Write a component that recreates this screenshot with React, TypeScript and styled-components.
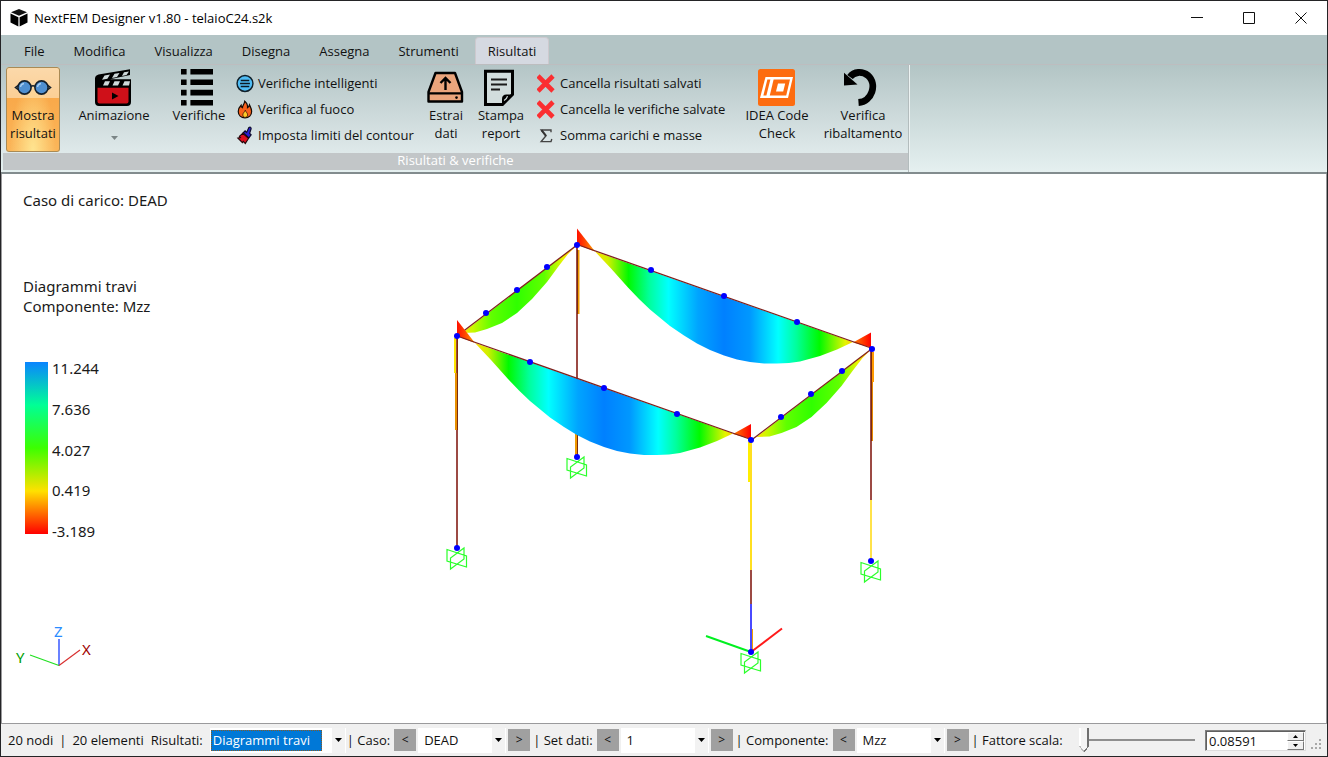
import React, { ReactNode, useState } from 'react';
import styled, { createGlobalStyle, css } from 'styled-components';

const GlobalStyle = createGlobalStyle`
  *, *::before, *::after { box-sizing: border-box; }
  body { margin: 0; background: #fff; }
  body, button, input, select {
    font-family: 'Open Sans', 'Noto Sans', sans-serif;
    font-size: 13px;
    line-height: 18px;
    color: #111;
  }
  button { margin: 0; padding: 0; border: 0; background: none; }
  svg { display: block; flex: none; }
`;

/* ---------- window frame ---------- */

const Window = styled.div`
  display: flex;
  flex-direction: column;
  min-height: 100vh;
  border: 1px solid #242426;
`;

const TitleBar = styled.header`
  display: flex;
  align-items: center;
  height: 34px;
  padding-left: 8px;
  gap: 5px;
  background: #fff;
`;

const Title = styled.h1`
  flex: 1;
  margin: 0;
  font-size: 13px;
  font-weight: 400;
  line-height: 18px;
  color: #000;
`;

const WindowButtons = styled.div`
  display: flex;
`;

const WindowButton = styled.button`
  display: grid;
  place-items: center;
  width: 52px;
  height: 32px;
`;

/* ---------- ribbon ---------- */

const TabBar = styled.nav`
  display: flex;
  align-items: flex-end;
  height: 30px;
  padding-left: 8px;
  background: #b3c4c5;
  border-bottom: 1px solid #bdbdbf;
`;

const Tab = styled.button<{ $active?: boolean }>`
  height: 27px;
  padding: 0 14px 0 15px;
  border-radius: 4px 4px 0 0;
  ${(p) =>
    p.$active &&
    css`
      margin: 0 2px;
      padding: 0 12px;
      background: #d5d9e1;
      border: 1px solid #cdc9ce;
      border-bottom: 0;
    `}
`;

const Ribbon = styled.section`
  display: flex;
  background: linear-gradient(#b3c5c5, #e5f0f0);
  border-bottom: 2px solid #828c8e;
`;

const Group = styled.div`
  display: flex;
  flex-direction: column;
  padding-bottom: 2px;
  border-right: 1px solid #b3bcbd;
  box-shadow: 1px 0 #edf3f3;
`;

const GroupBody = styled.div`
  display: flex;
  gap: 6px;
  height: 88px;
  padding: 2px 2px 0 5px;
  background: linear-gradient(#b4c5c6, #dfe9ea);
`;

const GroupLabel = styled.div`
  height: 17px;
  margin-left: 2px;
  line-height: 15px;
  text-align: center;
  color: #fff;
  background: #c2c6c8;
`;

const BigButton = styled.button<{ $width: number; $active?: boolean }>`
  display: flex;
  flex-direction: column;
  align-items: center;
  width: ${(p) => p.$width}px;
  height: 85px;
  padding-top: 2px;
  border-radius: 3px;
  ${(p) =>
    p.$active &&
    css`
      background:
        radial-gradient(ellipse at 50% 100%, #ffe591 0, rgba(255, 229, 145, 0) 60%),
        linear-gradient(#fbd9ab 0, #fbcf95 36%, #f9a94a 37%, #fbb65a 100%);
      box-shadow: inset 0 0 0 1px #a98a55;
    `}
`;

const BigIcon = styled.span`
  height: 37px;
`;

const ButtonText = styled.span`
  white-space: pre-line;
  text-align: center;
`;

const MenuCaret = styled.span`
  padding-top: 12px;
`;

const SmallColumn = styled.div<{ $width: number; $inset?: number }>`
  display: flex;
  flex-direction: column;
  width: ${(p) => p.$width}px;
  padding: 3px 0 0 ${(p) => p.$inset ?? 0}px;
`;

const SmallButton = styled.button`
  display: flex;
  align-items: center;
  gap: 4px;
  height: 26px;
  white-space: nowrap;
`;

/* ---------- viewport ---------- */

const Viewport = styled.main`
  position: relative;
  display: flex;
  flex: 1;
  flex-direction: column;
  border: 1px solid #9a9a9c;
  border-top: 0;
  background: #fff;
`;

const Scene = styled.svg`
  position: absolute;
  inset: 0;
  width: 100%;
  height: 100%;
`;

const Overlay = styled.div`
  display: flex;
  flex: 1;
  flex-direction: column;
  align-items: flex-start;
  padding: 16px 0 54px 12px;
  font-size: 15px;
  font-family: 'Noto Sans', sans-serif;
  line-height: 20px;
  color: #1a1a1a;
`;

const LoadCase = styled.p`
  margin: 0 0 66px 9px;
`;

const ResultInfo = styled.p`
  margin: 0 0 42px 9px;
`;

const Legend = styled.div`
  display: flex;
  gap: 4px;
  margin-left: 11px;
`;

const ColorScale = styled.div`
  width: 23px;
  height: 172px;
  margin-top: 4px;
  background: linear-gradient(#0a84ff, #00ff96 25%, #3cff00 50%, #ffe100 75%, #ff0000);
`;

const ScaleValues = styled.ul`
  display: flex;
  flex-direction: column;
  justify-content: space-between;
  height: 183px;
  margin: 0;
  padding: 0;
  list-style: none;
`;

const Gizmo = styled.svg`
  margin-top: auto;
`;

/* ---------- status bar ---------- */

const StatusBar = styled.footer`
  display: flex;
  align-items: center;
  height: 32px;
  padding: 0 4px 0 7px;
  background: #f0f0f0;
  white-space: pre;
`;

const StatusText = styled.span`
  padding-right: 6px;
`;

const ResultLabel = styled.label`
  padding: 0 7px 0 1px;
`;

const FieldLabel = styled.label`
  padding: 0 2px 0 1px;
`;

const Combo = styled.span<{ $width: number }>`
  position: relative;
  display: flex;
  flex: none;
  align-items: center;
  width: ${(p) => p.$width}px;
  height: 25px;
  padding: 0 18px 0 1px;
  background: #fff;
`;

const ComboSelect = styled.select<{ $focused?: boolean }>`
  appearance: none;
  width: 100%;
  height: 21px;
  margin: 0;
  padding: 0 5px;
  border: 0;
  outline: 0;
  background: transparent;
  ${(p) =>
    p.$focused &&
    css`
      width: 111px;
      padding: 0 1px;
      color: #fff;
      background: #0078d7;
      border: 1px dotted #8a5a20;
    `}
`;

const ComboArrow = styled.span`
  position: absolute;
  top: 0;
  right: 1px;
  display: grid;
  place-items: center;
  width: 13px;
  height: 25px;
  background: #f2f2f2;
  pointer-events: none;
`;

const StepButton = styled.button`
  flex: none;
  width: 22px;
  height: 22px;
  margin: 0 2px;
  background: #a0a0a0;
  font-size: 12px;
`;

const ScaleSlider = styled.input`
  appearance: none;
  flex: none;
  width: 116px;
  height: 26px;
  margin: 0 10px 0 auto;
  background: linear-gradient(#8e8e8e, #8e8e8e) 4px 12px / 112px 2px no-repeat;
  &::-webkit-slider-thumb {
    appearance: none;
    width: 10px;
    height: 25px;
    background:
      linear-gradient(to bottom right, #f6f6f6 36%, #777 37% 50%, #f0f0f0 51%) 5px 18px / 5px 7px no-repeat,
      linear-gradient(to bottom left, #f6f6f6 36%, #bbb 37% 50%, #f0f0f0 51%) 0 18px / 5px 7px no-repeat,
      linear-gradient(90deg, #fff 0 2px, #f4f4f4 2px 8px, #707070 8px) 0 0 / 10px 18px no-repeat;
  }
`;

const Spinner = styled.span`
  display: flex;
  flex: none;
  width: 101px;
  height: 21px;
  border: 1px solid #808080;
  border-right-color: #ddd;
  border-bottom-color: #ddd;
  box-shadow: inset 1px 1px #606060;
  background: #fff;
`;

const SpinnerInput = styled.input`
  flex: 1;
  min-width: 0;
  padding: 1px 3px 0;
  border: 0;
  outline: 0;
  background: transparent;
`;

const SpinnerButtons = styled.span`
  display: flex;
  flex-direction: column;
  width: 18px;
  padding: 1px 1px 0 0;
`;

const SpinnerButton = styled.button`
  display: grid;
  flex: 1;
  place-items: center;
  background: #f0f0f0;
  border: 1px solid #fff;
  border-right-color: #777;
  border-bottom-color: #777;
`;

const Grip = styled.svg`
  align-self: flex-end;
  margin: 0 0 5px 5px;
`;

/* ---------- icons ---------- */

const AppIcon = () => (
  <svg width="20" height="20" viewBox="0 0 20 20">
    <path d="M10 1 18 4.2 10 7.8 2 4.2Z" fill="#111" />
    <path d="M1.5 5.6 9.4 9.2V18.6L1.5 14.6Z" fill="#000" />
    <path d="M18.5 5.6 10.6 9.2V18.6L18.5 14.6Z" fill="#000" />
  </svg>
);

const GlassesIcon = () => (
  <svg width="38" height="36" viewBox="0 0 38 36">
    <g fill="#4f8fd0" stroke="#14202c" strokeWidth="1.6">
      <circle cx="10.5" cy="18.5" r="6.6" />
      <circle cx="27.5" cy="18.5" r="6.6" />
      <path fill="none" d="M17 17.5q2-1.6 4 0M4 16.5l-2.5 2 2.5 2M34 16.5l2.5 2-2.5 2" />
    </g>
    <path d="M6.5 18a4 4 0 0 1 3.5-3.5M23.5 18a4 4 0 0 1 3.5-3.5" fill="none" stroke="#a8cdf0" strokeWidth="1.3" />
  </svg>
);

const ClapperIcon = () => (
  <svg width="38" height="37" viewBox="1 0 38 37">
    <path d="M1 9.5Q1 6.5 4.5 5.5L36 .2V6L16 10.2H37V33Q37 37 33 37H5Q1 37 1 33Z" fill="#000" />
    <path d="M10.5 6.6 16 5.6 13.4 9.8 8 10.8ZM20.5 4.8 25.5 4 23 8 18 9ZM30 3.2 35 2.4 32.5 6 28 7ZM11 12.2H16L14 16.4H9ZM20.5 12.2H26L24 16.4H18.5ZM30.5 12.2H36L35 16.4H28.5Z" fill="#cfd9da" />
    <path d="M3.5 18.8H34.5V32.5Q34.5 34.6 32.5 34.6H5.5Q3.5 34.6 3.5 32.5Z" fill="#cf1019" />
    <path d="M18 23.5 24.5 27 18 30.5Z" fill="#000" />
  </svg>
);

const ListIcon = () => (
  <svg width="36" height="37" viewBox="0 0 36 37">
    {[0, 10.4, 20.8, 31].map((y) => (
      <path key={y} d={`M0 ${y}h5.6v5.6H0ZM9.4 ${y}H32v5.6H9.4Z`} fill="#000" />
    ))}
  </svg>
);

const LinesIcon = () => (
  <svg width="18" height="19" viewBox="0 0 19 19">
    <circle cx="9.5" cy="9.5" r="8.4" fill="#4fbdf5" stroke="#10202a" strokeWidth="1.5" />
    <path d="M5 6.3h9M4.3 9.5h10.4M5 12.7h9" stroke="#0c1a24" strokeWidth="1.7" />
  </svg>
);

const FireIcon = () => (
  <svg width="18" height="19" viewBox="0 0 19 19">
    <path d="M9.2.8C9 4 6.8 5 6.8 7.6 5.6 7.2 5.4 6 5.4 5 3.4 7 2.4 9.2 2.4 11.6c0 4 3 6.7 7.1 6.7s7-2.8 7-6.7c0-2.9-1.3-4.9-2.3-7C13.8 6.2 13.2 7.2 12.2 7.6 12.4 4.6 11.2 2.3 9.2.8Z" fill="#f8601a" stroke="#160b05" strokeWidth="1.3" />
    <path d="M9.8 10.2c-.2 1.8-2.6 2.6-2.6 5 0 1.7 1.1 2.6 2.5 2.6s2.6-1 2.6-2.6c0-1.9-1.7-2.6-2.5-5Z" fill="#ffc825" stroke="#2b1206" strokeWidth=".8" />
  </svg>
);

const BrushIcon = () => (
  <svg width="18" height="19" viewBox="0 0 19 19">
    <path d="M11.2 6.2 13.6 1Q15.8 0 16 2.4L14.4 7.2 16 8.8 13.6 12 7.6 6.6 9.6 4.6Z" fill="#2b1fd0" stroke="#0a0828" strokeWidth="1.2" />
    <path d="M7.2 7.2 13.2 12.6 9.8 18 7.8 15.8 6.8 17 2 12.2 4.6 11.8 3.6 10.4Z" fill="#e01020" stroke="#220408" strokeWidth="1.2" />
  </svg>
);

const DriveIcon = () => (
  <svg width="38" height="36" viewBox="1 0 38 36">
    <path d="M9.5 4H29L36 23V32.5H2.5V23Z" fill="#eba57c" stroke="#000" strokeWidth="2.4" strokeLinejoin="round" />
    <path d="M2.5 24.4H36" stroke="#000" strokeWidth="2.4" />
    <path d="M19.5 21V10M14.5 14 19.5 9 24.5 14" fill="none" stroke="#000" strokeWidth="2.4" />
    <circle cx="30.5" cy="28.6" r="1.3" />
  </svg>
);

const ReportIcon = () => (
  <svg width="34" height="37" viewBox="2 0 34 37">
    <path d="M3.5 2.2H30.5V25.5L20.5 35.5H3.5Z" fill="#d2dddd" stroke="#000" strokeWidth="3" />
    <path d="M20 36.5V30Q20 25.5 24.5 25.5H32Z" fill="#000" />
    <path d="M22 31.5Q25 30 25.5 27.2" stroke="#d2dddd" strokeWidth="1.2" fill="none" />
    <path d="M9 10.5H25M9 15.5H25M9 20.5H18" stroke="#1b1b1b" strokeWidth="1.8" />
  </svg>
);

const CrossIcon = () => (
  <svg width="19" height="19" viewBox="1 0 19 19">
    <path d="M2 2 17 17M17 2 2 17" stroke="#fb2e31" strokeWidth="4.6" />
  </svg>
);

const SigmaIcon = () => (
  <svg width="19" height="19" viewBox="1 0 19 19">
    <path d="M15 6.2V4H5.2L10 9.8 5.2 15.6H15L15.8 13" fill="none" stroke="#444" strokeWidth="1.4" />
    <path d="M5.5 4.2 10 9.8" stroke="#333" strokeWidth="2" />
  </svg>
);

const IdeaIcon = () => (
  <svg width="38" height="37" viewBox="0 0 38 37">
    <rect width="37" height="37" rx="2.5" fill="#fd6c10" />
    <path d="M7.5 8H35L30 29H2Z" fill="#fff" />
    <path d="M9.4 10.5H12.4L8.4 26.5H5.4Z" fill="#fd6c10" />
    <path d="M15.6 10.5H32L28.2 26.5H11.8Z" fill="#fd6c10" />
    <path d="M20 14.5H27.2L25.2 22.5H18Z" fill="#fff" />
  </svg>
);

const RotateIcon = () => (
  <svg width="38" height="37" viewBox="4 0 38 37">
    <path d="M10 8C14 2.5 22 2 28 6.5 37.5 15 32 32.5 18.5 33.5" fill="none" stroke="#000" strokeWidth="6.8" />
    <path d="M2.5 2.5 17.5 15.5 3.5 16.5Z" fill="#000" />
  </svg>
);

const Caret = ({ color = '#000' }: { color?: string }) => (
  <svg width="7" height="4" viewBox="0 0 7 4">
    <path d="M0 0H7L3.5 4Z" fill={color} />
  </svg>
);

/* ---------- structural model ---------- */

const Support = ({ x, y }: { x: number; y: number }) => (
  <path
    transform={`translate(${x} ${y})`}
    d="M-10 1.5V13L9.5 19V8ZM7 0V11L-6.5 21V10Z"
    fill="none"
    stroke="#2bff2b"
    strokeWidth="1.2"
  />
);

const LongMoment = ({ x, y }: { x: number; y: number }) => (
  <g transform={`translate(${x} ${y})`}>
    <path
      d="M18 7 34 24 51 43 62 54.5 73 65 93 81.5 107 91 120 99 133 105.5 147 111 160 115 173 117.5 187 119 200 119 212 118.5 223 117 243 111.5 260 105 276 97.5Z"
      fill="url(#longMoment)"
    />
    <path d="M0-16V0L18 7Z" fill="url(#leftPeak)" />
    <path d="M294 88V103L276 98Z" fill="url(#rightPeak)" />
    <path d="M0 0 294 103.5" stroke="#80201c" strokeWidth="1.3" />
  </g>
);

const ShortMoment = ({ x, y }: { x: number; y: number }) => (
  <g transform={`translate(${x} ${y})`}>
    <path d="M5-3 18-3.5 30-7 45-13 60-23 75-37 90-54 101-69 111-82 120-91Z" fill="url(#shortMoment)" />
    <path d="M0 0 120-91" stroke="#80201c" strokeWidth="1.3" />
  </g>
);

const nodes: [number, number][] = [
  [457, 336], [530, 362], [604, 388], [677, 414], [751, 440],
  [577, 245], [651, 270], [724, 296], [797, 322], [872, 349],
  [486, 313], [517, 290], [547, 267], [781, 417], [811, 394], [842, 371],
  [457, 548], [577, 457], [871, 561], [751, 652],
];

const Model = () => (
  <Scene viewBox="2 174 1324 549" preserveAspectRatio="xMinYMin meet" role="img" aria-label="Mzz">
    <defs>
      <linearGradient id="longMoment" gradientUnits="userSpaceOnUse" x1="18" y1="0" x2="276" y2="0">
        <stop offset="0" stopColor="#ffe000" />
        <stop offset=".05" stopColor="#d0f000" />
        <stop offset=".13" stopColor="#00fa00" />
        <stop offset=".21" stopColor="#00ff9c" />
        <stop offset=".285" stopColor="#00ffff" />
        <stop offset=".4" stopColor="#00a4ff" />
        <stop offset=".5" stopColor="#0080ff" />
        <stop offset=".6" stopColor="#0098ff" />
        <stop offset=".71" stopColor="#00ffff" />
        <stop offset=".78" stopColor="#00ff9c" />
        <stop offset=".87" stopColor="#00fa00" />
        <stop offset=".97" stopColor="#e4f400" />
        <stop offset="1" stopColor="#ffd000" />
      </linearGradient>
      <linearGradient id="shortMoment" gradientUnits="userSpaceOnUse" x1="5" y1="0" x2="115" y2="0">
        <stop offset="0" stopColor="#ffe600" />
        <stop offset=".1" stopColor="#c8f800" />
        <stop offset=".27" stopColor="#60ff00" />
        <stop offset=".5" stopColor="#30ff00" />
        <stop offset=".75" stopColor="#60ff00" />
        <stop offset=".92" stopColor="#ecf400" />
        <stop offset="1" stopColor="#ffc000" />
      </linearGradient>
      <linearGradient id="leftPeak">
        <stop offset="0" stopColor="#ff1000" />
        <stop offset=".4" stopColor="#ff4000" />
        <stop offset="1" stopColor="#ffa000" />
      </linearGradient>
      <linearGradient id="rightPeak">
        <stop offset="0" stopColor="#ff8000" />
        <stop offset=".7" stopColor="#ff2800" />
        <stop offset="1" stopColor="#ff0000" />
      </linearGradient>
    </defs>

    <g fill="none" strokeWidth="2">
      <path d="M577 245V457" stroke="#9c4a44" />
      <path d="M578.5 250V314" stroke="#f09a00" />
      <path d="M576 432V457" stroke="#f09a00" />
      <path d="M577.5 250V314M577.5 432V457" stroke="#7a2a10" strokeWidth="1" />
      <path d="M457 336V548" stroke="#9c4a44" />
      <path d="M455 338V373" stroke="#ffe600" />
      <path d="M456 373V430" stroke="#e89000" />
      <path d="M457.5 338V430" stroke="#7a2a10" strokeWidth="1" />
      <path d="M871 349V500" stroke="#9c4a44" />
      <path d="M873 352V382" stroke="#ff9a00" />
      <path d="M872 382V441" stroke="#e88a00" />
      <path d="M871.5 352V441" stroke="#7a2a10" strokeWidth="1" />
      <path d="M871 500V561" stroke="#ffe24a" />
    </g>

    <ShortMoment x={457} y={336} />
    <ShortMoment x={751.5} y={440} />
    <LongMoment x={577} y={244.5} />
    <LongMoment x={457} y={336} />

    <g fill="none" strokeWidth="2">
      <path d="M749.5 442V482" stroke="#ffee00" strokeWidth="3" />
      <path d="M751 442V570" stroke="#ffdf20" />
      <path d="M751 570V604" stroke="#9c4a44" />
      <path d="M752 629V652" stroke="#f0a000" />
      <path d="M751 604V652" stroke="#4a4aff" />
      <path d="M706 636 751 652" stroke="#00f020" />
      <path d="M782 628.5 751 652" stroke="#ff1a1a" />
    </g>

    <Support x={457} y={548} />
    <Support x={577} y={457} />
    <Support x={871} y={561} />
    <Support x={751} y={652} />
    {nodes.map(([cx, cy]) => (
      <circle key={`${cx}-${cy}`} cx={cx} cy={cy} r="3" fill="#0000ff" />
    ))}
  </Scene>
);

const AxisGizmo = () => (
  <Gizmo width="80" height="48" viewBox="0 0 80 48" fontSize="15">
    <path d="M45 44.5V18" stroke="#2a4cff" strokeWidth="1.4" />
    <path d="M45 44.5 16 34" stroke="#20e020" strokeWidth="1.2" />
    <path d="M45 44.5 66 29" stroke="#d83030" strokeWidth="1.2" />
    <text x="40" y="16" fill="#2a8cff">Z</text>
    <text x="2" y="42" fill="#00a000">Y</text>
    <text x="68" y="34" fill="#a00000">X</text>
  </Gizmo>
);

/* ---------- composed controls ---------- */

type BigProps = { icon: ReactNode; text: string; width: number; active?: boolean; menu?: boolean };

const Big = ({ icon, text, width, active, menu }: BigProps) => (
  <BigButton $width={width} $active={active}>
    <BigIcon>{icon}</BigIcon>
    <ButtonText>{text}</ButtonText>
    {menu && (
      <MenuCaret>
        <Caret color="#7b8586" />
      </MenuCaret>
    )}
  </BigButton>
);

const Small = ({ icon, text }: { icon: ReactNode; text: string }) => (
  <SmallButton>
    {icon}
    <span>{text}</span>
  </SmallButton>
);

type FieldProps = { id: string; value: string; width: number; focused?: boolean };

const ComboBox = ({ id, value, width, focused }: FieldProps) => (
  <Combo $width={width}>
    <ComboSelect id={id} $focused={focused} defaultValue={value}>
      <option>{value}</option>
    </ComboSelect>
    <ComboArrow>
      <Caret />
    </ComboArrow>
  </Combo>
);

const Stepper = ({ id, label, value, width }: FieldProps & { label: string }) => (
  <>
    <FieldLabel htmlFor={id}>{`| ${label}:`}</FieldLabel>
    <StepButton>&lt;</StepButton>
    <ComboBox id={id} value={value} width={width} />
    <StepButton>&gt;</StepButton>
  </>
);

const tabs = ['File', 'Modifica', 'Visualizza', 'Disegna', 'Assegna', 'Strumenti', 'Risultati'];
const scale = ['11.244', '7.636', '4.027', '0.419', '-3.189'];

export default function App() {
  const [tab, setTab] = useState('Risultati');
  const [factor, setFactor] = useState('0.08591');

  return (
    <>
      <GlobalStyle />
      <Window>
        <TitleBar>
          <AppIcon />
          <Title>NextFEM Designer v1.80 - telaioC24.s2k</Title>
          <WindowButtons>
            <WindowButton aria-label="Riduci">
              <svg width="12" height="12"><path d="M0 5.5H12" stroke="#111" /></svg>
            </WindowButton>
            <WindowButton aria-label="Ingrandisci">
              <svg width="12" height="12"><path d="M.5.5H11.5V11.5H.5Z" fill="none" stroke="#111" /></svg>
            </WindowButton>
            <WindowButton aria-label="Chiudi">
              <svg width="12" height="12"><path d="M.5.5 11.5 11.5M11.5.5.5 11.5" stroke="#111" /></svg>
            </WindowButton>
          </WindowButtons>
        </TitleBar>

        <TabBar>
          {tabs.map((name) => (
            <Tab key={name} $active={name === tab} onClick={() => setTab(name)}>
              {name}
            </Tab>
          ))}
        </TabBar>

        <Ribbon>
          <Group>
            <GroupBody>
              <Big icon={<GlassesIcon />} text={'Mostra\nrisultati'} width={54} active />
              <Big icon={<ClapperIcon />} text="Animazione" width={96} menu />
              <Big icon={<ListIcon />} text="Verifiche" width={62} />
              <SmallColumn $width={182}>
                <Small icon={<LinesIcon />} text="Verifiche intelligenti" />
                <Small icon={<FireIcon />} text="Verifica al fuoco" />
                <Small icon={<BrushIcon />} text="Imposta limiti del contour" />
              </SmallColumn>
              <Big icon={<DriveIcon />} text={'Estrai\ndati'} width={44} />
              <Big icon={<ReportIcon />} text={'Stampa\nreport'} width={54} />
              <SmallColumn $width={200} $inset={3}>
                <Small icon={<CrossIcon />} text="Cancella risultati salvati" />
                <Small icon={<CrossIcon />} text="Cancella le verifiche salvate" />
                <Small icon={<SigmaIcon />} text="Somma carichi e masse" />
              </SmallColumn>
              <Big icon={<IdeaIcon />} text={'IDEA Code\nCheck'} width={74} />
              <Big icon={<RotateIcon />} text={'Verifica\nribaltamento'} width={86} />
            </GroupBody>
            <GroupLabel>Risultati &amp; verifiche</GroupLabel>
          </Group>
        </Ribbon>

        <Viewport>
          <Model />
          <Overlay>
            <LoadCase>Caso di carico: DEAD</LoadCase>
            <ResultInfo>
              Diagrammi travi
              <br />
              Componente: Mzz
            </ResultInfo>
            <Legend>
              <ColorScale />
              <ScaleValues>
                {scale.map((value) => (
                  <li key={value}>{value}</li>
                ))}
              </ScaleValues>
            </Legend>
            <AxisGizmo />
          </Overlay>
        </Viewport>

        <StatusBar>
          <StatusText>20 nodi</StatusText>
          <StatusText>|</StatusText>
          <StatusText>20 elementi</StatusText>
          <ResultLabel htmlFor="risultati">Risultati:</ResultLabel>
          <ComboBox id="risultati" value="Diagrammi travi" width={136} focused />
          <Stepper id="caso" label="Caso" value="DEAD" width={88} />
          <Stepper id="set" label="Set dati" value="1" width={88} />
          <Stepper id="componente" label="Componente" value="Mzz" width={88} />
          <FieldLabel htmlFor="scala">| Fattore scala:</FieldLabel>
          <ScaleSlider id="scala" type="range" defaultValue="0" />
          <Spinner>
            <SpinnerInput aria-label="Fattore scala" value={factor} onChange={(e) => setFactor(e.target.value)} />
            <SpinnerButtons>
              <SpinnerButton aria-label="Aumenta">
                <svg width="5" height="3"><path d="M0 3H5L2.5 0Z" /></svg>
              </SpinnerButton>
              <SpinnerButton aria-label="Diminuisci">
                <svg width="5" height="3"><path d="M0 0H5L2.5 3Z" /></svg>
              </SpinnerButton>
            </SpinnerButtons>
          </Spinner>
          <Grip width="12" height="12" fill="#a8a8a8">
            <path d="M8 0h2v2h-2ZM4 4h2v2h-2ZM8 4h2v2h-2ZM0 8h2v2h-2ZM4 8h2v2h-2ZM8 8h2v2h-2Z" />
          </Grip>
        </StatusBar>
      </Window>
    </>
  );
}
